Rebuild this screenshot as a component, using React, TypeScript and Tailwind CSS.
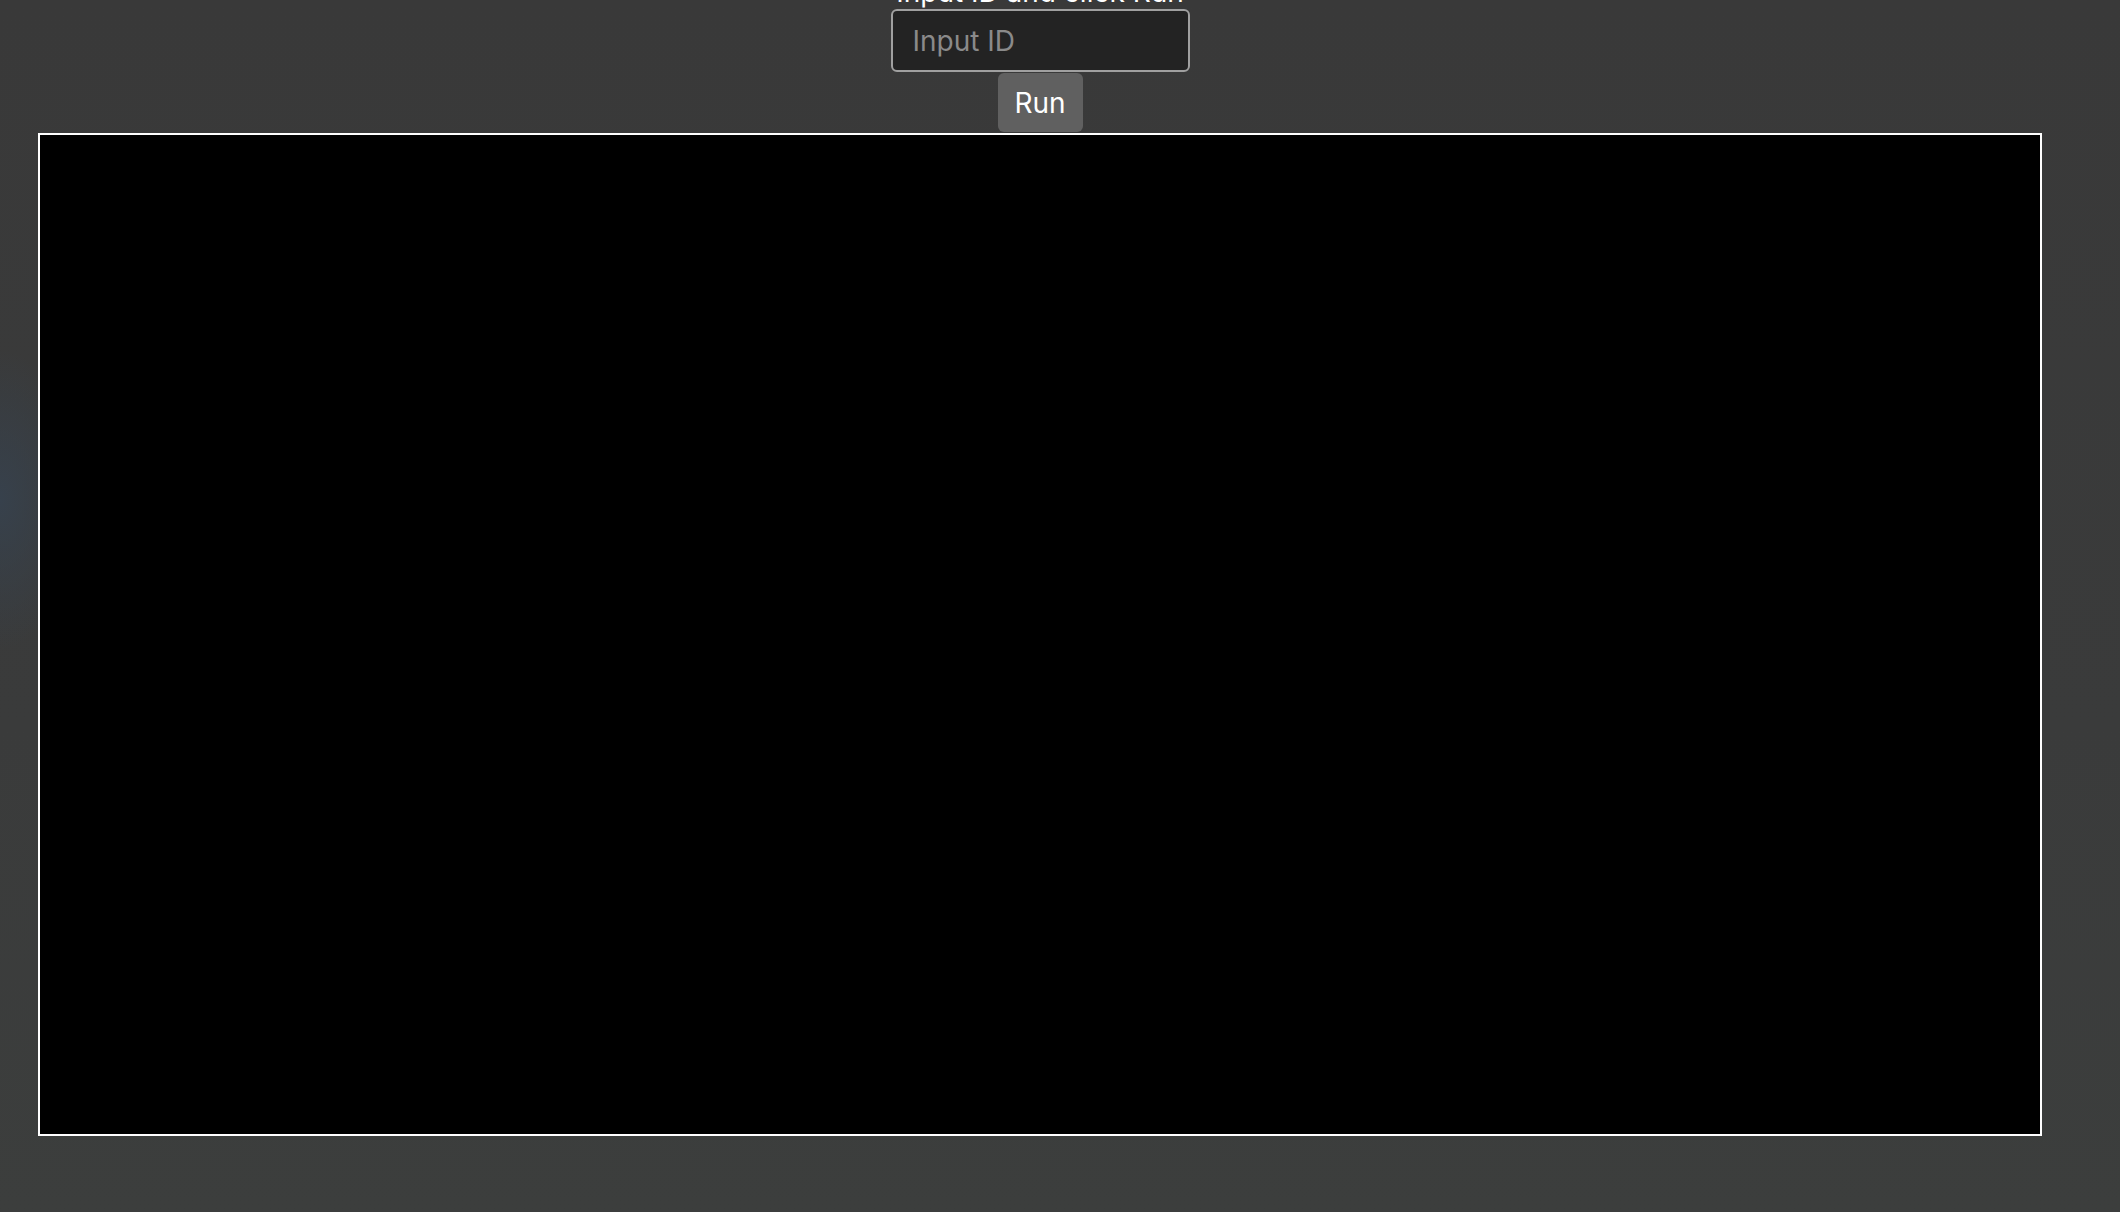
import { useState } from "react";

const App = () => {
  const [id, setId] = useState("");

  return (
    <div className="min-h-screen w-full overflow-hidden bg-[#393939] bg-[radial-gradient(ellipse_80px_150px_at_0px_500px,#37414c_0%,rgba(55,65,76,0)_100%),linear-gradient(180deg,#393939_0%,#3a3b3b_60%,#3c3e3d_100%)] font-['Inter',sans-serif] text-white">
      <div className="flex w-[2080px] flex-col items-center">
        <h1 className="mt-[-25px] h-[34px] text-[28px] leading-[35px] font-normal">Input ID and click Run</h1>
        <input
          value={id}
          onChange={(e) => setId(e.target.value)}
          placeholder="Input ID"
          className="h-[63px] w-[299px] rounded-[6px] border-2 border-[#a0a0a0] bg-[#232323] px-[20px] text-[28px] text-white outline-none placeholder:text-[#8a8a8a]"
        />
        <button className="mt-[1px] h-[59px] w-[85px] rounded-[6px] bg-[#606060] text-[28px] text-white">Run</button>
        <canvas className="mt-[1px] block h-[1003px] w-[2004px] border-2 border-white bg-black" />
      </div>
    </div>
  );
};

export default App;
